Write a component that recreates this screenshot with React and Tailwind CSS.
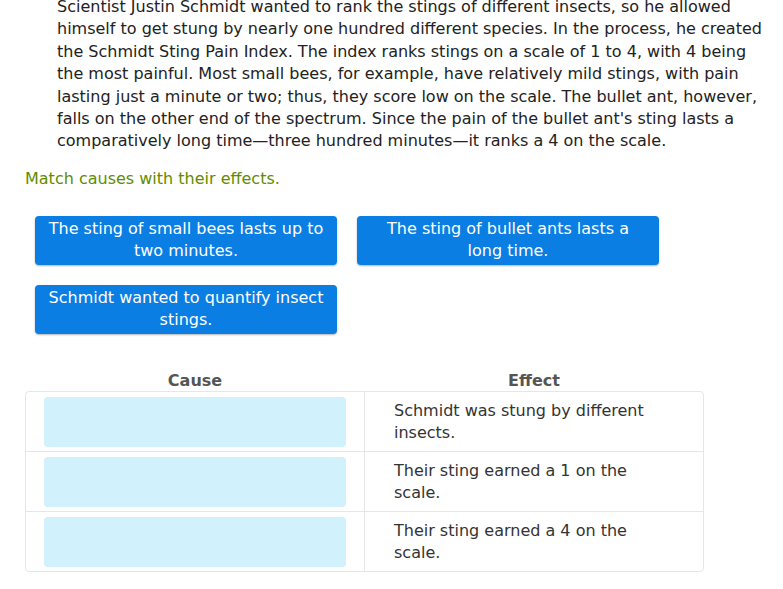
import React from 'react';

const passage =
  "Scientist Justin Schmidt wanted to rank the stings of different insects, so he allowed himself to get stung by nearly one hundred different species. In the process, he created the Schmidt Sting Pain Index. The index ranks stings on a scale of 1 to 4, with 4 being the most painful. Most small bees, for example, have relatively mild stings, with pain lasting just a minute or two; thus, they score low on the scale. The bullet ant, however, falls on the other end of the spectrum. Since the pain of the bullet ant's sting lasts a comparatively long time\u2014three hundred minutes\u2014it ranks a 4 on the scale.";

const tiles = [
  'The sting of small bees lasts up to two minutes.',
  'The sting of bullet ants lasts a long time.',
  'Schmidt wanted to quantify insect stings.',
];

const effects = [
  'Schmidt was stung by different insects.',
  'Their sting earned a 1 on the scale.',
  'Their sting earned a 4 on the scale.',
];

function Tile({ text }) {
  return (
    <div className="w-[302px] h-[49px] rounded-[4px] bg-[#0a7ee3] shadow-[0_1px_2px_rgba(0,0,0,0.3)] flex items-center justify-center px-3 text-center text-white leading-[22px]">
      {text}
    </div>
  );
}

export default function App() {
  return (
    <div
      className="w-[783px] h-[589px] overflow-hidden bg-white text-[16px]"
      style={{ fontFamily: '"DejaVu Sans", Verdana, sans-serif' }}
    >
      {/* Passage */}
      <p className="ml-[57px] w-[716px] mt-[-4px] leading-[22.4px] text-[#222]">{passage}</p>

      {/* Prompt */}
      <p className="ml-[25px] mt-[15px] text-[#5f8d00] leading-[22px]">Match causes with their effects.</p>

      {/* Answer tiles */}
      <div className="ml-[35px] mt-[26px] grid grid-cols-[302px_302px] gap-x-[20px] gap-y-[20px] w-fit">
        <Tile text={tiles[0]} />
        <Tile text={tiles[1]} />
        <Tile text={tiles[2]} />
      </div>

      {/* Matching table */}
      <div className="ml-[25px] mt-[34px] w-[679px]">
        <div className="grid grid-cols-[339px_340px] h-[23px] pt-[1px] items-center font-bold text-[#555] text-center">
          <div className="pl-[1px]">Cause</div>
          <div>Effect</div>
        </div>
        <div className="border border-[#e6e6e6] rounded-[4px]">
          {effects.map((e, i) => (
            <div
              key={i}
              className={`grid grid-cols-[339px_1fr] ${i > 0 ? 'h-[60px] border-t border-[#e6e6e6]' : 'h-[59px]'}`}
            >
              <div className="border-r border-[#e6e6e6] pt-[5px] pl-[18px]">
                <div className="w-[302px] h-[50px] rounded-[4px] bg-[#d1f1fc]" />
              </div>
              <div className="pl-[29px] pr-[30px] pt-[2px] flex items-center text-[#333] leading-[22px]">
                <span className="w-[265px]">{e}</span>
              </div>
            </div>
          ))}
        </div>
      </div>
    </div>
  );
}
